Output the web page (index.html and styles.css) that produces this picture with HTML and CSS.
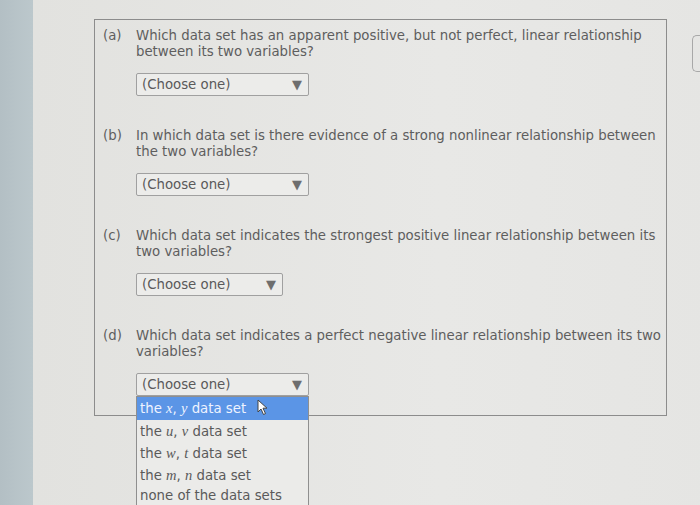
FILE: index.html
```html
<!DOCTYPE html>
<html lang="en">
<head>
<meta charset="utf-8">
<title>Data sets</title>
<link rel="stylesheet" href="styles.css">
</head>
<body>
<div class="screen">
  <div class="strip"></div>
  <div class="main">
    <div class="box">
      <div class="q">
        <span class="lab">(a)</span>
        <div class="body">
          <p class="text">Which data set has an apparent positive, but not perfect, linear relationship between its two variables?</p>
          <div class="sel"><span>(Choose one)</span><span class="arr">▼</span></div>
        </div>
      </div>
      <div class="q">
        <span class="lab">(b)</span>
        <div class="body">
          <p class="text">In which data set is there evidence of a strong nonlinear relationship between the two variables?</p>
          <div class="sel"><span>(Choose one)</span><span class="arr">▼</span></div>
        </div>
      </div>
      <div class="q">
        <span class="lab">(c)</span>
        <div class="body">
          <p class="text">Which data set indicates the strongest positive linear relationship between its two variables?</p>
          <div class="sel narrow"><span>(Choose one)</span><span class="arr">▼</span></div>
        </div>
      </div>
      <div class="q last">
        <span class="lab">(d)</span>
        <div class="body">
          <p class="text">Which data set indicates a perfect negative linear relationship between its two variables?</p>
          <div class="selwrap">
            <div class="sel open"><span>(Choose one)</span><span class="arr">▼</span></div>
            <ul class="menu">
              <li class="hl">the <i>x</i>, <i>y</i> data set <svg class="cursor" width="12" height="17" viewBox="0 0 12 17"><path d="M1 1 L1 13 L4 10 L6.5 15.5 L8.5 14.6 L6 9.2 L10 9.2 Z" fill="#fff" stroke="#444" stroke-width="1"/></svg></li>
              <li>the <i>u</i>, <i>v</i> data set</li>
              <li>the <i>w</i>, <i>t</i> data set</li>
              <li>the <i>m</i>, <i>n</i> data set</li>
              <li class="end">none of the data sets</li>
            </ul>
          </div>
        </div>
      </div>
    </div>
    <div class="side"></div>
  </div>
</div>
</body>
</html>
```
FILE: styles.css
```css
html, body {
  margin: 0;
  padding: 0;
  width: 700px;
  height: 505px;
  overflow: hidden;
}
body {
  background: #e4e4e2;
  font-family: "DejaVu Sans", Verdana, sans-serif;
  color: #5e5e5e;
}
.screen {
  display: flex;
  height: 505px;
}
.strip {
  width: 33px;
  flex: none;
  background: linear-gradient(90deg, #b3bfc4, #bcc8cc);
}
.main {
  flex: 1;
  display: flex;
  align-items: flex-start;
  background: linear-gradient(90deg, #e2e2df, #e8e8e6 60%, #e5e5e3);
}
.box {
  margin: 19px 0 0 61px;
  width: 573px;
  border: 1px solid #8c8c8c;
  padding: 8px 0 19px 8px;
  box-sizing: border-box;
  flex: none;
}
.q {
  display: flex;
  margin-bottom: 32px;
}
.q.last { margin-bottom: 0; }
.lab {
  width: 33px;
  flex: none;
  font-size: 13.3px;
  line-height: 16px;
}
.body { flex: 1; }
.text {
  margin: 0;
  font-size: 13.3px;
  line-height: 16px;
  padding-right: 4px;
}
.sel {
  margin-top: 13px;
  width: 173px;
  height: 23px;
  box-sizing: border-box;
  border: 1px solid #a0a0a0;
  border-radius: 2px;
  background: #ececea;
  display: flex;
  align-items: center;
  justify-content: space-between;
  padding: 0 6px 0 5px;
  font-size: 13.3px;
  color: #5a5a5a;
}
.sel.narrow { width: 147px; }
.arr {
  font-size: 13px;
  color: #6e6e6e;
}
.selwrap { position: relative; }
.menu {
  position: absolute;
  left: 0;
  top: 100%;
  width: 173px;
  box-sizing: border-box;
  margin: 0;
  padding: 0;
  list-style: none;
  border: 1px solid #8f8f8f;
  background: #ebebe9;
  z-index: 2;
}
.menu li {
  height: 22px;
  line-height: 22px;
  padding-left: 3px;
  font-size: 13.3px;
  color: #5a5a5a;
  white-space: nowrap;
  position: relative;
}
.menu li.hl {
  height: 23px;
  line-height: 23px;
}
.menu li.end {
  height: 19px;
  line-height: 19px;
}
.menu li i {
  font-family: "Liberation Serif", "Times New Roman", serif;
  font-size: 14.5px;
}
.menu li.hl {
  background: #5b95e6;
  color: #eef3ff;
}
.cursor {
  position: absolute;
  left: 120px;
  top: 2px;
}
.side {
  margin: 35px 0 0 25px;
  width: 20px;
  height: 35px;
  border: 1px solid #a8a8a8;
  border-right: none;
  border-radius: 5px 0 0 5px;
  flex: none;
}
```
